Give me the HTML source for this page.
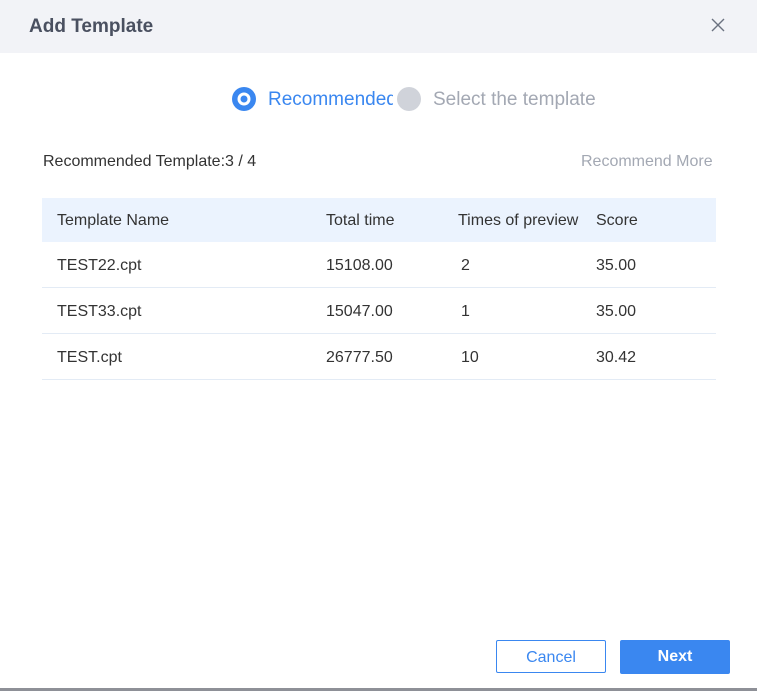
<!DOCTYPE html>
<html><head><style>
body{margin:0;width:757px;height:691px;background:#fff;font-family:"Liberation Sans",sans-serif;position:relative;overflow:hidden}
.hd{position:absolute;left:0;top:0;width:757px;height:53px;background:#f2f3f7}
.hd .t{position:absolute;left:29px;top:16px;font-size:19px;font-weight:bold;color:#4a5060}
.x{position:absolute;left:711px;top:18px}
.abs{position:absolute;white-space:nowrap}
.tbl{position:absolute;left:42px;top:198px;width:674px}
.row{position:relative;height:45px;border-bottom:1px solid #e3ebf5;font-size:16px;color:#333}
.row span{position:absolute;top:15px}
.th{background:#ebf3fe;border:none;height:44px}
.btn{position:absolute;top:640px;height:33px;width:108px;border-radius:2px;font-size:16px;text-align:center;line-height:33px;box-sizing:border-box}
</style></head><body>
<div class="hd"><div class="t">Add Template</div>
<svg class="x" width="14" height="14" viewBox="0 0 14 14"><path d="M1 1L13 13M13 1L1 13" stroke="#6b7280" stroke-width="1.4"/></svg></div>
<svg class="abs" style="left:232px;top:87px" width="24" height="24"><circle cx="12" cy="12" r="12" fill="#3a87f0"/><circle cx="12" cy="12" r="5" fill="none" stroke="#fff" stroke-width="3"/></svg>
<div class="abs" style="left:268px;top:89px;width:125px;overflow:hidden;font-size:19px;color:#3a87f0">Recommended</div>
<svg class="abs" style="left:397px;top:87px" width="24" height="24"><circle cx="12" cy="12" r="12" fill="#d0d3da"/></svg>
<div class="abs" style="left:433px;top:89px;font-size:19px;color:#a3a8b3">Select the template</div>
<div class="abs" style="left:43px;top:153px;font-size:16px;color:#333">Recommended Template:3 / 4</div>
<div class="abs" style="left:581px;top:153px;font-size:16px;color:#a3a8b3">Recommend More</div>
<div class="tbl">
<div class="row th"><span style="left:15px;top:14px">Template Name</span><span style="left:284px;top:14px">Total time</span><span style="left:416px;top:14px">Times of preview</span><span style="left:554px;top:14px">Score</span></div>
<div class="row"><span style="left:15px">TEST22.cpt</span><span style="left:284px">15108.00</span><span style="left:419px">2</span><span style="left:554px">35.00</span></div>
<div class="row"><span style="left:15px">TEST33.cpt</span><span style="left:284px">15047.00</span><span style="left:419px">1</span><span style="left:554px">35.00</span></div>
<div class="row"><span style="left:15px">TEST.cpt</span><span style="left:284px">26777.50</span><span style="left:419px">10</span><span style="left:554px">30.42</span></div>
</div>
<div class="btn" style="left:496px;border:1px solid #3a87f0;color:#3a87f0;width:110px">Cancel</div>
<div class="btn" style="left:620px;background:#3a87f0;color:#fff;width:110px;height:34px;font-weight:bold">Next</div>
<div class="abs" style="left:0;top:688px;width:757px;height:3px;background:#8e9097"></div>
</body></html>
